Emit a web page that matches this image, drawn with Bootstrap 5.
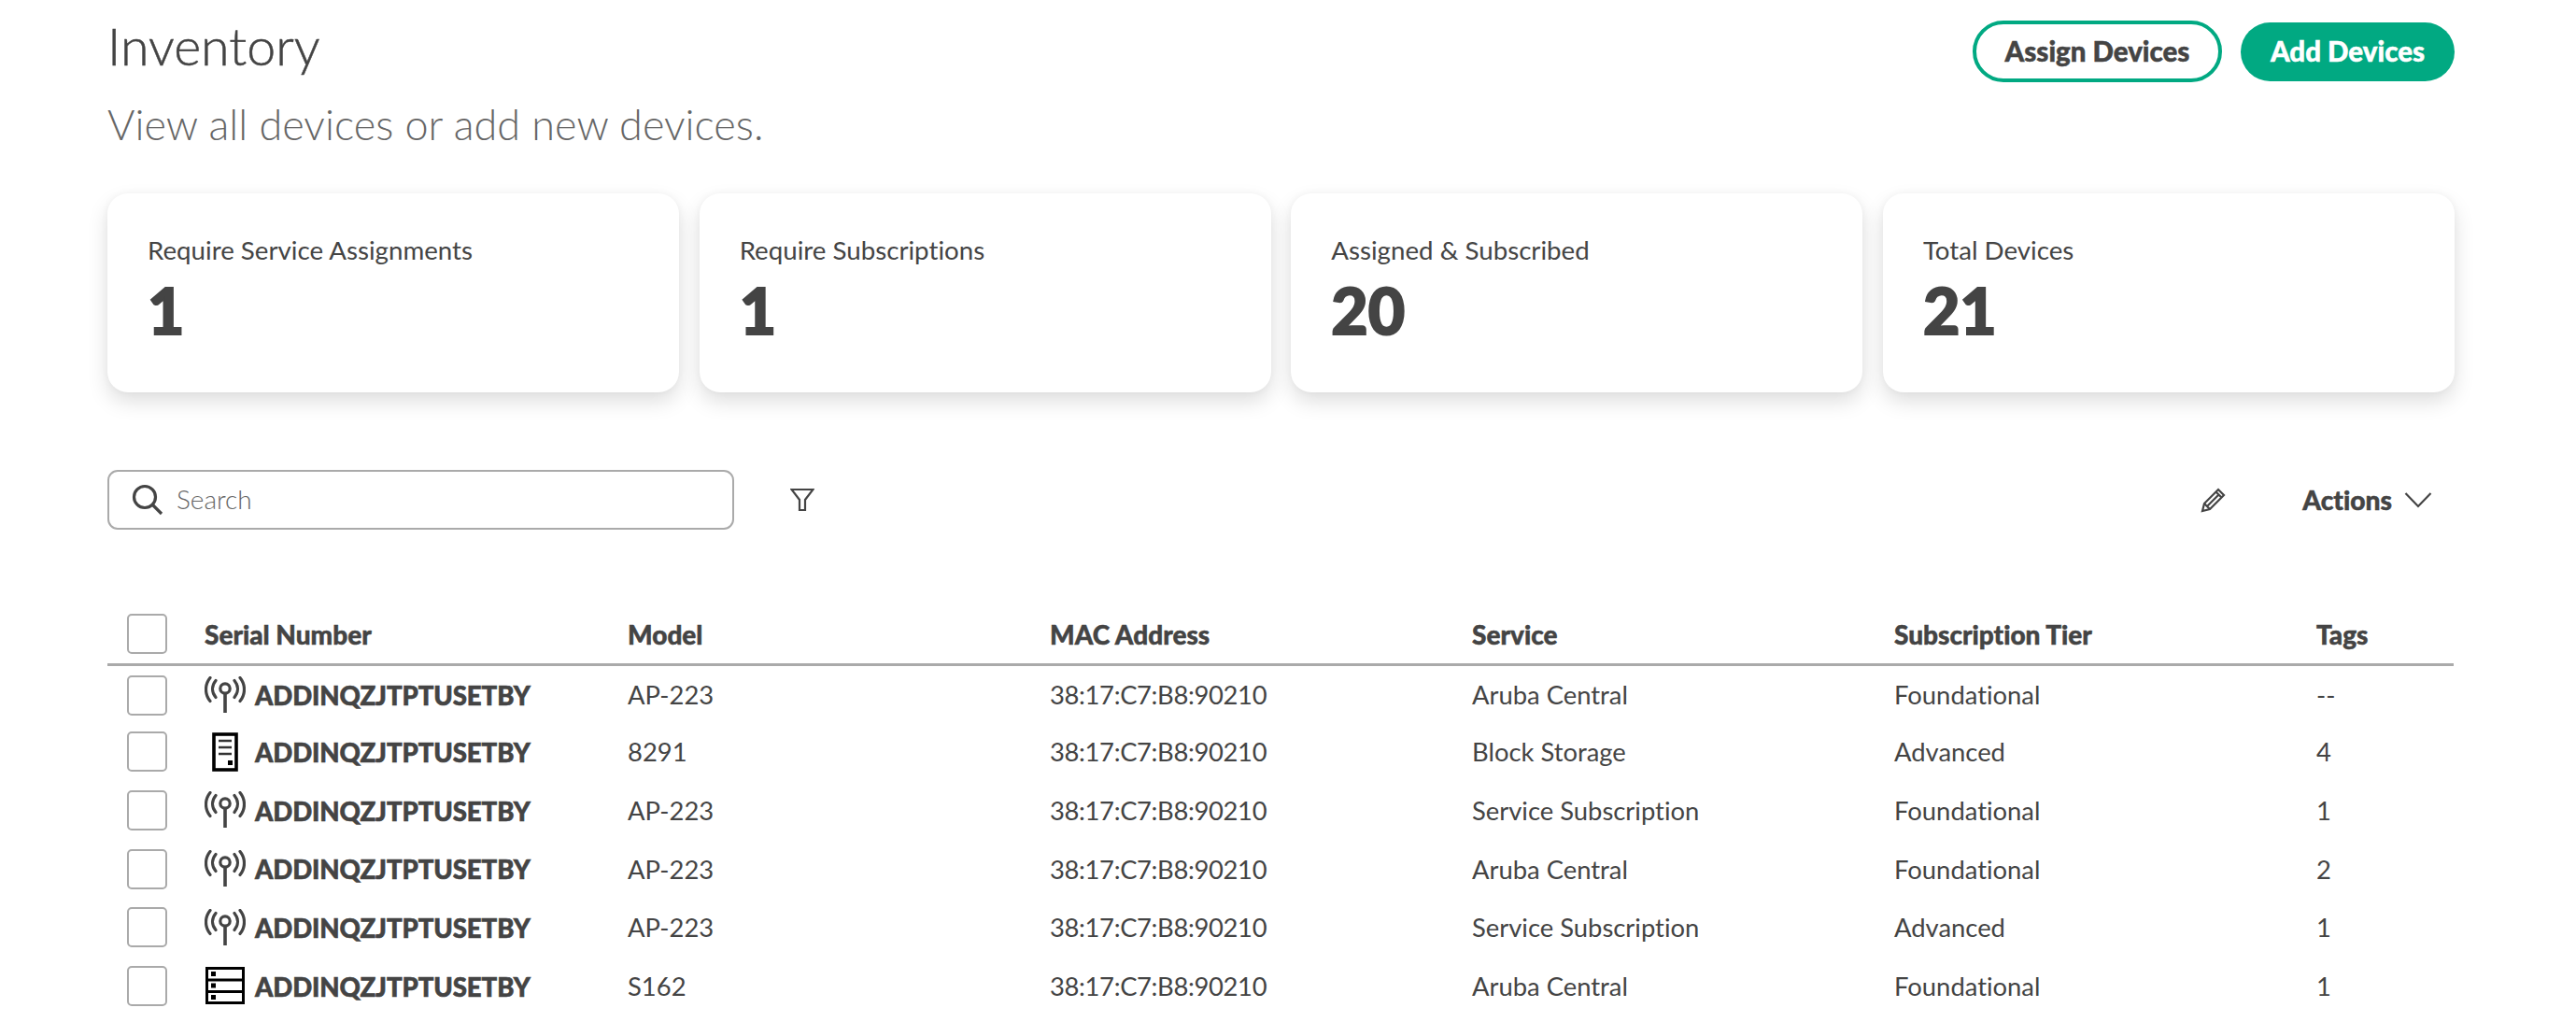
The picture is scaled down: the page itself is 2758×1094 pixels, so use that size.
<!DOCTYPE html>
<html lang="en">
<head>
<meta charset="utf-8">
<title>Inventory</title>
<link href="https://cdn.jsdelivr.net/npm/bootstrap@5.3.0/dist/css/bootstrap.min.css" rel="stylesheet">
<style>
html,body{height:1094px;overflow:hidden;background:#fff}
body{font-family:Lato,"Liberation Sans",sans-serif;color:#444;font-size:27.4px;font-variant-ligatures:none}
.page-wrap{padding:0 130px 0 115px}
.top-head{height:207px}
.page-title{font-size:55.5px;font-weight:300;line-height:60px;margin:19px 0 0;color:#444;-webkit-text-stroke:.5px #444}
.page-sub{font-size:45px;font-weight:300;line-height:56px;margin:26px 0 0;color:#666}
.btn-gap{gap:20px}
.top-btn{font-size:29.5px;font-weight:900;height:66px;padding:0;border-radius:33px;border:4px solid #01a982;color:#444;background:#fff;margin-top:22px;-webkit-text-stroke:.5px currentColor}
.top-btn:hover{color:#444;background:#fff;border-color:#01a982}
.assign-btn{width:267px}
.add-btn{width:229px;height:63px;margin-top:24px;border:0;background:#01a982;color:#fff}
.add-btn:hover{background:#01a982;color:#fff}
.stat-row{gap:21.5px}
.stat-card{flex:1 1 0;height:213px;border:0;border-radius:22px;box-shadow:0 10px 22px rgba(0,0,0,.13),0 0 8px rgba(0,0,0,.04);padding:43px 42px 42px 43px}
.stat-label{font-size:27.7px;line-height:36px;color:#444}
.stat-num{font-size:68px;font-weight:900;line-height:66px;margin-top:13px;color:#444;-webkit-text-stroke:2px #444}
.tool-row{margin-top:83px;height:64px}
.search-box{width:671px;height:64px;border:2px solid #aaa;border-radius:11px;padding-left:24px}
.search-box .form-control{border:0;box-shadow:none;font-size:28px;padding:0 0 3px 14px;color:#444;font-weight:300;background:transparent}
.search-box .form-control::placeholder{color:#666}
.filter-ico{margin-left:60px}
.act-label{font-size:28.2px;font-weight:900;color:#444;-webkit-text-stroke:.5px #444}
.act-gap{margin-left:81px}
.chev{margin-left:13px;margin-right:24px}
.dev-table{table-layout:fixed;width:2512px;margin:75px 0 0;color:#444;font-size:27.4px;--bs-table-color:#444}
.dev-table th,.dev-table td{border:0;padding:0;vertical-align:middle;white-space:nowrap;font-weight:400}
.dev-table thead th{height:69px;border-bottom:3px solid #aaa;font-weight:900;font-size:28px;padding-top:7px;-webkit-text-stroke:.5px #444}
.dev-table thead th.chk-cell{padding-top:5px;padding-bottom:0}
.dev-table tbody td{height:62.6px}
.dev-table .chk-cell{padding-left:21px}
.dev-table tbody tr:first-child td{padding-top:2px}
.box-chk{display:block;width:43px;height:43px;margin:0;border:2px solid #aaa;border-radius:5px;background:#fff;appearance:none}
.serial{font-weight:900;font-size:27.6px;letter-spacing:-.1px;-webkit-text-stroke:.6px #444;padding-top:2px}
.ico-slot{display:flex;width:44px;justify-content:center;margin-right:10px}
.mac-cell{letter-spacing:-.35px}
</style>
</head>
<body>
<svg width="0" height="0" class="d-none">
<symbol id="ant" viewBox="0 0 44 40"><g fill="none" stroke="#444" stroke-width="3.200" stroke-linecap="round"><circle cx="22" cy="13" r="5.2" stroke-width="3.2"/><path d="M22 18v21" stroke-width="3.6" stroke-linecap="butt"/><path d="M12 4.500c-4.600 5.600-4.600 12.400 0 18M32 4.500c4.600 5.600 4.600 12.400 0 18"/><path d="M6 1.500c-6 7.300-6 17.700 0 25M38 1.500c6 7.300 6 17.700 0 25"/></g></symbol>
<symbol id="tower" viewBox="0 0 28 42"><rect x="2" y="2" width="24" height="38" fill="#fff" stroke="#000" stroke-width="3.600"/><path d="M7 9h14M7 16h14M7 23h14" stroke="#333" stroke-width="2.600"/><rect x="17" y="30" width="5" height="5" fill="#000"/></symbol>
<symbol id="srv" viewBox="0 0 42 40"><rect x="1.500" y="1.500" width="39" height="37" fill="#fff" stroke="#000" stroke-width="3"/><path d="M2 14h38M2 26.500h38" stroke="#000" stroke-width="3"/><rect x="6" y="5" width="5" height="5" fill="#000"/><rect x="6" y="17.500" width="5" height="5" fill="#000"/><rect x="6" y="30" width="5" height="5" fill="#000"/></symbol>
</svg>
<div class="page-wrap">
  <header class="top-head d-flex justify-content-between align-items-start">
    <div>
      <h1 class="page-title">Inventory</h1>
      <p class="page-sub">View all devices or add new devices.</p>
    </div>
    <div class="d-flex btn-gap align-items-start">
      <button type="button" class="btn top-btn assign-btn">Assign Devices</button>
      <button type="button" class="btn top-btn add-btn">Add Devices</button>
    </div>
  </header>

  <section class="d-flex stat-row">
    <div class="card stat-card"><div class="stat-label">Require Service Assignments</div><div class="stat-num">1</div></div>
    <div class="card stat-card"><div class="stat-label">Require Subscriptions</div><div class="stat-num">1</div></div>
    <div class="card stat-card"><div class="stat-label">Assigned &amp; Subscribed</div><div class="stat-num">20</div></div>
    <div class="card stat-card"><div class="stat-label">Total Devices</div><div class="stat-num">21</div></div>
  </section>

  <section class="tool-row d-flex align-items-center">
    <div class="search-box d-flex align-items-center">
      <svg width="34" height="34" viewBox="0 0 34 34" fill="none" stroke="#444" stroke-width="3.200" class="flex-shrink-0"><circle cx="14" cy="14" r="11.500"/><path d="M22.500 22.500L32 32"/></svg>
      <input class="form-control" type="text" placeholder="Search" aria-label="Search">
    </div>
    <svg class="filter-ico" width="26" height="26" viewBox="0 0 26 26" fill="none" stroke="#444" stroke-width="2.200"><path d="M1.500 2h23L16 13v11h-6V13z"/></svg>
    <div class="ms-auto d-flex align-items-center">
      <svg width="28" height="28" viewBox="0 0 28 28" fill="none" stroke="#444" stroke-width="2.200"><path d="M2 26l2-8L19 3l6 6L10 24z"/><path d="M16.500 5.500l6 6M4 18l6 6M7 21L20 8"/></svg>
      <span class="act-label act-gap">Actions</span>
      <svg class="chev" width="30" height="18" viewBox="0 0 30 18" fill="none" stroke="#444" stroke-width="2.200"><path d="M1.500 2L15 16 28.500 2"/></svg>
    </div>
  </section>

  <table class="table dev-table">
    <colgroup><col style="width:104px"><col style="width:453px"><col style="width:452px"><col style="width:452px"><col style="width:452px"><col style="width:452px"><col style="width:147px"></colgroup>
    <thead>
      <tr><th class="chk-cell"><input class="box-chk" type="checkbox" aria-label="Select all"></th><th>Serial Number</th><th>Model</th><th>MAC Address</th><th>Service</th><th>Subscription Tier</th><th>Tags</th></tr>
    </thead>
    <tbody>
      <tr><td class="chk-cell"><input class="box-chk" type="checkbox" aria-label="Select"></td><td><div class="d-flex align-items-center"><span class="ico-slot"><svg width="44" height="40"><use href="#ant"/></svg></span><span class="serial">ADDINQZJTPTUSETBY</span></div></td><td>AP-223</td><td class="mac-cell">38:17:C7:B8:90210</td><td>Aruba Central</td><td>Foundational</td><td>--</td></tr>
      <tr><td class="chk-cell"><input class="box-chk" type="checkbox" aria-label="Select"></td><td><div class="d-flex align-items-center"><span class="ico-slot"><svg width="28" height="42"><use href="#tower"/></svg></span><span class="serial">ADDINQZJTPTUSETBY</span></div></td><td>8291</td><td class="mac-cell">38:17:C7:B8:90210</td><td>Block Storage</td><td>Advanced</td><td>4</td></tr>
      <tr><td class="chk-cell"><input class="box-chk" type="checkbox" aria-label="Select"></td><td><div class="d-flex align-items-center"><span class="ico-slot"><svg width="44" height="40"><use href="#ant"/></svg></span><span class="serial">ADDINQZJTPTUSETBY</span></div></td><td>AP-223</td><td class="mac-cell">38:17:C7:B8:90210</td><td>Service Subscription</td><td>Foundational</td><td>1</td></tr>
      <tr><td class="chk-cell"><input class="box-chk" type="checkbox" aria-label="Select"></td><td><div class="d-flex align-items-center"><span class="ico-slot"><svg width="44" height="40"><use href="#ant"/></svg></span><span class="serial">ADDINQZJTPTUSETBY</span></div></td><td>AP-223</td><td class="mac-cell">38:17:C7:B8:90210</td><td>Aruba Central</td><td>Foundational</td><td>2</td></tr>
      <tr><td class="chk-cell"><input class="box-chk" type="checkbox" aria-label="Select"></td><td><div class="d-flex align-items-center"><span class="ico-slot"><svg width="44" height="40"><use href="#ant"/></svg></span><span class="serial">ADDINQZJTPTUSETBY</span></div></td><td>AP-223</td><td class="mac-cell">38:17:C7:B8:90210</td><td>Service Subscription</td><td>Advanced</td><td>1</td></tr>
      <tr><td class="chk-cell"><input class="box-chk" type="checkbox" aria-label="Select"></td><td><div class="d-flex align-items-center"><span class="ico-slot"><svg width="42" height="40"><use href="#srv"/></svg></span><span class="serial">ADDINQZJTPTUSETBY</span></div></td><td>S162</td><td class="mac-cell">38:17:C7:B8:90210</td><td>Aruba Central</td><td>Foundational</td><td>1</td></tr>
    </tbody>
  </table>
</div>
</body>
</html>
